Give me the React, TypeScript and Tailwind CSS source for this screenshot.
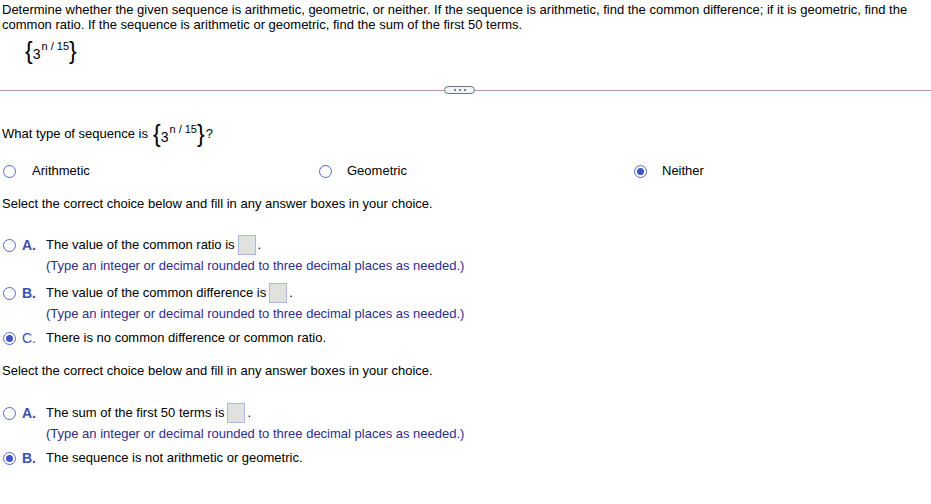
import React from "react";

function Sequence() {
  return (
    <span className="inline-flex items-center leading-none">
      <span className="relative top-[1px] text-[23px] font-light">{"{"}</span>
      <span className="relative top-[4px] text-[14px]">3</span>
      <span className="relative -top-[4px] ml-[1px] text-[11px]">n / 15</span>
      <span className="relative top-[1px] text-[23px] font-light">{"}"}</span>
    </span>
  );
}

function Radio({ checked = false }: { checked?: boolean }) {
  return (
    <span className="flex h-[13px] w-[13px] shrink-0 items-center justify-center rounded-full border-[1.5px] border-[#5468cf] bg-white">
      {checked ? <span className="h-[7px] w-[7px] rounded-full bg-[#3d55c6]" /> : null}
    </span>
  );
}

function AnswerBox() {
  return (
    <span className="ml-[3px] inline-block h-[20px] w-[18px] border border-[#a6b9e2] bg-[#e1e1e1] align-middle" />
  );
}

function Choice({
  letter,
  checked = false,
  children,
  hint,
  tall = false,
}: {
  letter: string;
  checked?: boolean;
  children: React.ReactNode;
  hint?: boolean;
  tall?: boolean;
}) {
  return (
    <div>
      <div className={`flex items-center ${tall ? "h-[20px]" : "h-[16px]"}`}>
        <span className="ml-[3px]">
          <Radio checked={checked} />
        </span>
        <span
          className={`ml-[6px] w-[24px] text-[14px] text-[#3b4fae] ${checked && letter === "C." ? "" : "font-bold"}`}
        >
          {letter}
        </span>
        <span className="flex items-center">{children}</span>
      </div>
      {hint ? (
        <p className="ml-[46px] mt-[3px] h-[16px] leading-[16px] text-[#2e2e8a]">
          (Type an integer or decimal rounded to three decimal places as needed.)
        </p>
      ) : null}
    </div>
  );
}

export default function App() {
  return (
    <div
      className="h-[504px] w-[931px] overflow-hidden bg-white text-[13px] text-black"
      style={{ fontFamily: '"Liberation Sans", Arial, sans-serif' }}
    >
      <p className="px-[2px] pt-[2px] leading-[15px]">
        Determine whether the given sequence is arithmetic, geometric, or neither. If the sequence is arithmetic, find the
        common difference; if it is geometric, find the common ratio. If the sequence is arithmetic or geometric, find the
        sum of the first 50 terms.
      </p>

      <div className="ml-[25px] mt-[6px] flex h-[24px] items-center">
        <Sequence />
      </div>

      <div className="relative mt-[23px] flex h-[10px] items-center">
        <div className="h-px w-full bg-[#b9939f]" />
        <div className="absolute left-[444px] top-[1px] flex h-[8px] w-[31px] items-center justify-center gap-[3px] rounded-full border-[1.5px] border-[#6b7787] bg-[#f2f3f5]">
          <span className="h-[2px] w-[2px] rounded-full bg-[#505a66]" />
          <span className="h-[2px] w-[2px] rounded-full bg-[#505a66]" />
          <span className="h-[2px] w-[2px] rounded-full bg-[#505a66]" />
        </div>
      </div>

      <div className="mt-[26px] flex h-[24px] items-center pl-[2px]">
        <span className="relative top-[1px] mr-[5px]">What type of sequence is</span>
        <Sequence />
        <span className="relative top-[1px] ml-[1px]">?</span>
      </div>

      <div className="mt-[18px] flex h-[16px] items-center">
        <div className="flex w-[316px] items-center pl-[3px]">
          <Radio />
          <span className="ml-[16px]">Arithmetic</span>
        </div>
        <div className="flex w-[315px] items-center pl-[3px]">
          <Radio />
          <span className="ml-[15px]">Geometric</span>
        </div>
        <div className="flex items-center pl-[3px]">
          <Radio checked />
          <span className="ml-[15px]">Neither</span>
        </div>
      </div>

      <p className="mt-[17px] h-[16px] pl-[2px] leading-[16px]">
        Select the correct choice below and fill in any answer boxes in your choice.
      </p>

      <div className="mt-[23px]">
        <Choice letter="A." hint tall>
          The value of the common ratio is <AnswerBox />
          <span className="ml-[2px]">.</span>
        </Choice>
      </div>
      <div className="mt-[9px]">
        <Choice letter="B." hint tall>
          The value of the common difference is <AnswerBox />
          <span className="ml-[2px]">.</span>
        </Choice>
      </div>
      <div className="mt-[8px]">
        <Choice letter="C." checked>
          There is no common difference or common ratio.
        </Choice>
      </div>

      <p className="mt-[17px] h-[16px] pl-[2px] leading-[16px]">
        Select the correct choice below and fill in any answer boxes in your choice.
      </p>

      <div className="mt-[24px]">
        <Choice letter="A." hint tall>
          The sum of the first 50 terms is <AnswerBox />
          <span className="ml-[2px]">.</span>
        </Choice>
      </div>
      <div className="mt-[8px]">
        <Choice letter="B." checked>
          The sequence is not arithmetic or geometric.
        </Choice>
      </div>
    </div>
  );
}
